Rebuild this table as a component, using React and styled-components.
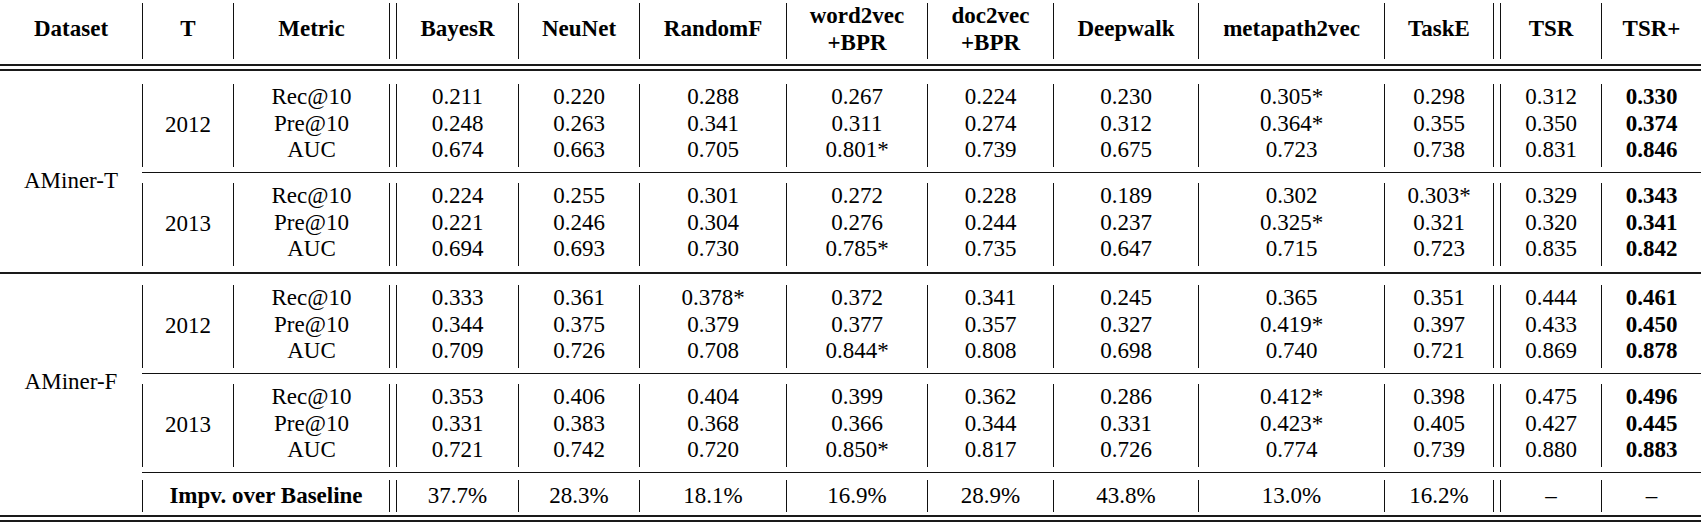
import React from 'react';
import styled, { createGlobalStyle, css } from 'styled-components';

const COLS = '91px 157px 128px 121px 147px 141px 126px 145px 186px 110px 107px 100px';
const LABEL_W = 142;

const GlobalStyle = createGlobalStyle`
  html, body { margin: 0; padding: 0; background: #fff; }
  body {
    font-family: "Liberation Serif", "Times New Roman", serif;
    color: #000;
  }
`;

const borders = css`
  ${p => p.$left && css`border-left: 1px solid #111;`}
  ${p => p.$right && css`border-right: 1px solid #111;`}
  ${p => p.$double && css`margin-left: 6px;`}
`;

const Table = styled.div`
  width: 1701px;
  padding-top: 3px;
  display: flex;
  flex-direction: column;
`;

const HeaderRow = styled.div`
  display: grid;
  grid-template-columns: ${LABEL_W}px ${COLS};
  height: 55px;
`;

const HeadCell = styled.div`
  display: flex;
  flex-direction: column;
  align-items: center;
  justify-content: center;
  padding-bottom: 3px;
  font-weight: 700;
  font-size: 23px;
  line-height: 26.7px;
  white-space: nowrap;
  ${borders}
`;

const DoubleRule = styled.div`
  box-sizing: border-box;
  margin-top: ${p => p.$mt}px;
  height: 7px;
  border-top: 2px solid ${'#1a1a1a'};
  border-bottom: 2px solid ${'#1a1a1a'};
`;

const Group = styled.div`
  display: flex;
  margin-top: ${p => p.$mt || 0}px;
`;

const Label = styled.div`
  width: ${LABEL_W}px;
  flex: none;
  display: flex;
  align-items: center;
  justify-content: center;
  padding-top: 12px;
  box-sizing: border-box;
  font-size: 23px;
`;

const Right = styled.div`
  flex: 1;
  display: flex;
  flex-direction: column;
`;

const Block = styled.div`
  display: grid;
  grid-template-columns: ${COLS};
  height: ${p => p.$h || 83}px;
`;

const DataCell = styled.div`
  display: flex;
  flex-direction: column;
  align-items: center;
  justify-content: ${p => (p.$center ? 'center' : 'flex-start')};
  font-size: 23px;
  line-height: 26.7px;
  white-space: nowrap;
  ${p => p.$span && css`grid-column: span ${p.$span};`}
  ${p => p.$bold && css`font-weight: 700;`}
  ${borders}
`;

const Cline = styled.div`
  margin: 5px 0 ${p => p.$mb ?? 10}px;
  height: 1px;
  background: #111;
`;

const MidRule = styled.div`
  margin: 6px 0 11px;
  height: 2px;
  background: #1a1a1a;
`;

const methods = [
  { name: ['BayesR'], double: true },
  { name: ['NeuNet'] },
  { name: ['RandomF'] },
  { name: ['word2vec', '+BPR'] },
  { name: ['doc2vec', '+BPR'] },
  { name: ['Deepwalk'] },
  { name: ['metapath2vec'] },
  { name: ['TaskE'], right: true },
  { name: ['TSR'], double: true },
  { name: ['TSR+'], bold: true },
];

const metrics = ['Rec@10', 'Pre@10', 'AUC'];

const data = [
  {
    dataset: 'AMiner-T',
    years: [
      {
        year: '2012',
        rows: [
          ['0.211', '0.220', '0.288', '0.267', '0.224', '0.230', '0.305*', '0.298', '0.312', '0.330'],
          ['0.248', '0.263', '0.341', '0.311', '0.274', '0.312', '0.364*', '0.355', '0.350', '0.374'],
          ['0.674', '0.663', '0.705', '0.801*', '0.739', '0.675', '0.723', '0.738', '0.831', '0.846'],
        ],
      },
      {
        year: '2013',
        rows: [
          ['0.224', '0.255', '0.301', '0.272', '0.228', '0.189', '0.302', '0.303*', '0.329', '0.343'],
          ['0.221', '0.246', '0.304', '0.276', '0.244', '0.237', '0.325*', '0.321', '0.320', '0.341'],
          ['0.694', '0.693', '0.730', '0.785*', '0.735', '0.647', '0.715', '0.723', '0.835', '0.842'],
        ],
      },
    ],
  },
  {
    dataset: 'AMiner-F',
    years: [
      {
        year: '2012',
        rows: [
          ['0.333', '0.361', '0.378*', '0.372', '0.341', '0.245', '0.365', '0.351', '0.444', '0.461'],
          ['0.344', '0.375', '0.379', '0.377', '0.357', '0.327', '0.419*', '0.397', '0.433', '0.450'],
          ['0.709', '0.726', '0.708', '0.844*', '0.808', '0.698', '0.740', '0.721', '0.869', '0.878'],
        ],
      },
      {
        year: '2013',
        rows: [
          ['0.353', '0.406', '0.404', '0.399', '0.362', '0.286', '0.412*', '0.398', '0.475', '0.496'],
          ['0.331', '0.383', '0.368', '0.366', '0.344', '0.331', '0.423*', '0.405', '0.427', '0.445'],
          ['0.721', '0.742', '0.720', '0.850*', '0.817', '0.726', '0.774', '0.739', '0.880', '0.883'],
        ],
      },
    ],
  },
];

const improvements = ['37.7%', '28.3%', '18.1%', '16.9%', '28.9%', '43.8%', '13.0%', '16.2%', '–', '–'];

function YearBlock({ year, rows }) {
  return (
    <Block>
      <DataCell $left $center>{year}</DataCell>
      <DataCell $left $right>
        {metrics.map(m => (
          <span key={m}>{m}</span>
        ))}
      </DataCell>
      {methods.map((m, ci) => (
        <DataCell key={ci} $left $double={m.double} $right={m.right} $bold={m.bold}>
          {rows.map((r, ri) => (
            <span key={ri}>{r[ci]}</span>
          ))}
        </DataCell>
      ))}
    </Block>
  );
}

export default function App() {
  return (
    <>
      <GlobalStyle />
      <Table>
        <HeaderRow>
          <HeadCell>Dataset</HeadCell>
          <HeadCell $left>T</HeadCell>
          <HeadCell $left $right>Metric</HeadCell>
          {methods.map((m, i) => (
            <HeadCell key={i} $left $double={m.double} $right={m.right}>
              {m.name.map(n => (
                <span key={n}>{n}</span>
              ))}
            </HeadCell>
          ))}
        </HeaderRow>
        <DoubleRule $mt={6} />
        {data.map((g, gi) => (
          <React.Fragment key={g.dataset}>
            {gi > 0 && <MidRule />}
            <Group $mt={gi === 0 ? 13 : 0}>
              <Label>{g.dataset}</Label>
              <Right>
                <YearBlock {...g.years[0]} />
                <Cline />
                <YearBlock {...g.years[1]} />
              </Right>
            </Group>
          </React.Fragment>
        ))}
        <Group>
          <Label />
          <Right>
            <Cline $mb={7} />
            <Block $h={32}>
              <DataCell $left $right $center $bold $span={2}>
                Impv. over Baseline
              </DataCell>
              {methods.map((m, ci) => (
                <DataCell key={ci} $left $center $double={m.double} $right={m.right}>
                  {improvements[ci]}
                </DataCell>
              ))}
            </Block>
          </Right>
        </Group>
        <DoubleRule $mt={3} />
      </Table>
    </>
  );
}
